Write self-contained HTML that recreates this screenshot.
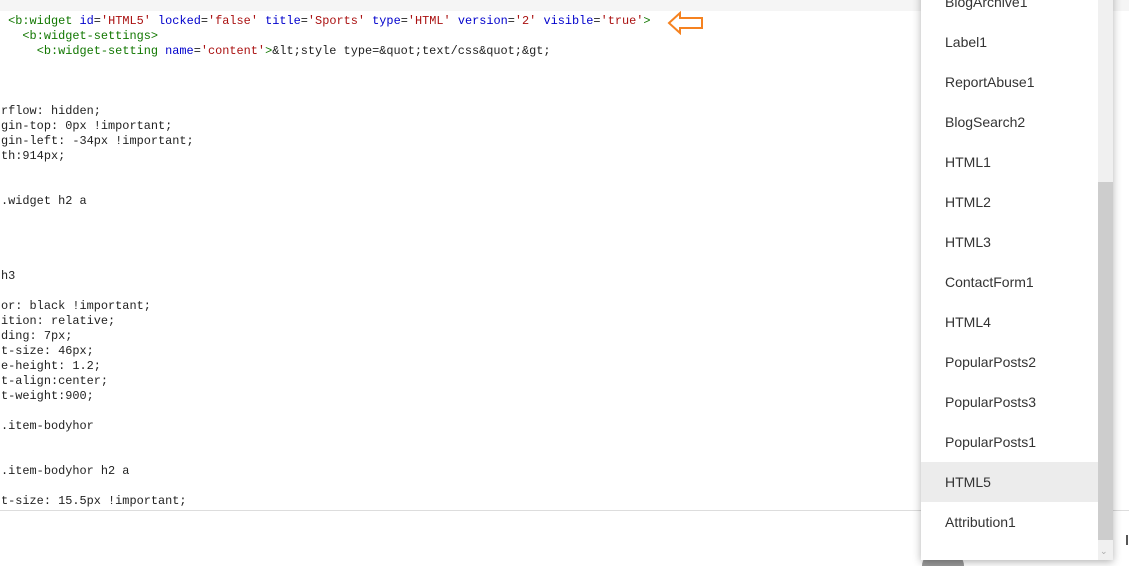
<!DOCTYPE html>
<html><head><meta charset="utf-8"><style>
html,body{margin:0;width:1129px;height:566px;overflow:hidden}
body{background:#fff;position:relative;font-family:"Liberation Sans",sans-serif}
.top{position:absolute;left:0;top:0;width:1129px;height:11px;background:#f5f5f5}
.code{position:absolute;left:1px;top:14px;font-family:"Liberation Mono",monospace;font-size:11.9px;line-height:15px;color:#222;white-space:pre}
.g{color:#117700}.b{color:#0000cc}.r{color:#aa1111}
.hr{position:absolute;left:0;top:510px;width:1129px;height:1px;background:#ddd}
.dd{position:absolute;left:921px;top:-18px;width:192px;height:578px;background:#fff;box-shadow:0 2px 8px rgba(0,0,0,.3);overflow:hidden}
.it{height:40px;line-height:40px;padding-left:24px;font-size:14px;color:#333}
.hl{background:#ececec}
.tr{position:absolute;left:1098px;top:0;width:15px;height:560px;background:#f0f0f0}
.th{position:absolute;left:1098px;top:182px;width:15px;height:358px;background:#cdcdcd}
.circ{position:absolute;left:922px;top:552px;width:42px;height:14px;border-radius:21px 21px 0 0;background:#999}
</style></head><body>
<div class="top"></div>
<div class="circ"></div>
<div class="code"> <span class="g">&lt;b:widget</span> <span class="b">id</span>=<span class="r">'HTML5'</span> <span class="b">locked</span>=<span class="r">'false'</span> <span class="b">title</span>=<span class="r">'Sports'</span> <span class="b">type</span>=<span class="r">'HTML'</span> <span class="b">version</span>=<span class="r">'2'</span> <span class="b">visible</span>=<span class="r">'true'</span><span class="g">&gt;</span>
   <span class="g">&lt;b:widget-settings&gt;</span>
     <span class="g">&lt;b:widget-setting</span> <span class="b">name</span>=<span class="r">'content'</span><span class="g">&gt;</span>&amp;lt;style type=&amp;quot;text/css&amp;quot;&amp;gt;



rflow: hidden;
gin-top: 0px !important;
gin-left: -34px !important;
th:914px;


.widget h2 a




h3

or: black !important;
ition: relative;
ding: 7px;
t-size: 46px;
e-height: 1.2;
t-align:center;
t-weight:900;

.item-bodyhor


.item-bodyhor h2 a

t-size: 15.5px !important;</div>
<svg style="position:absolute;left:667px;top:11px" width="38" height="24" viewBox="0 0 38 24"><path d="M2 12 L13 2 L13 7 L35 7 L35 17 L13 17 L13 22 Z" fill="none" stroke="#f58220" stroke-width="2"/></svg>
<div class="hr"></div>
<div style="position:absolute;left:1126px;top:535px;width:2px;height:10px;background:#555"></div>
<div class="dd">
<div class="it">BlogArchive1</div><div class="it">Label1</div><div class="it">ReportAbuse1</div><div class="it">BlogSearch2</div><div class="it">HTML1</div><div class="it">HTML2</div><div class="it">HTML3</div><div class="it">ContactForm1</div><div class="it">HTML4</div><div class="it">PopularPosts2</div><div class="it">PopularPosts3</div><div class="it">PopularPosts1</div><div class="it hl">HTML5</div><div class="it">Attribution1</div>
</div>
<div class="tr"></div><div class="th"></div>
<div style="position:absolute;left:1100px;top:546px;font-size:9px;color:#aaa">&#8964;</div>
</body></html>
